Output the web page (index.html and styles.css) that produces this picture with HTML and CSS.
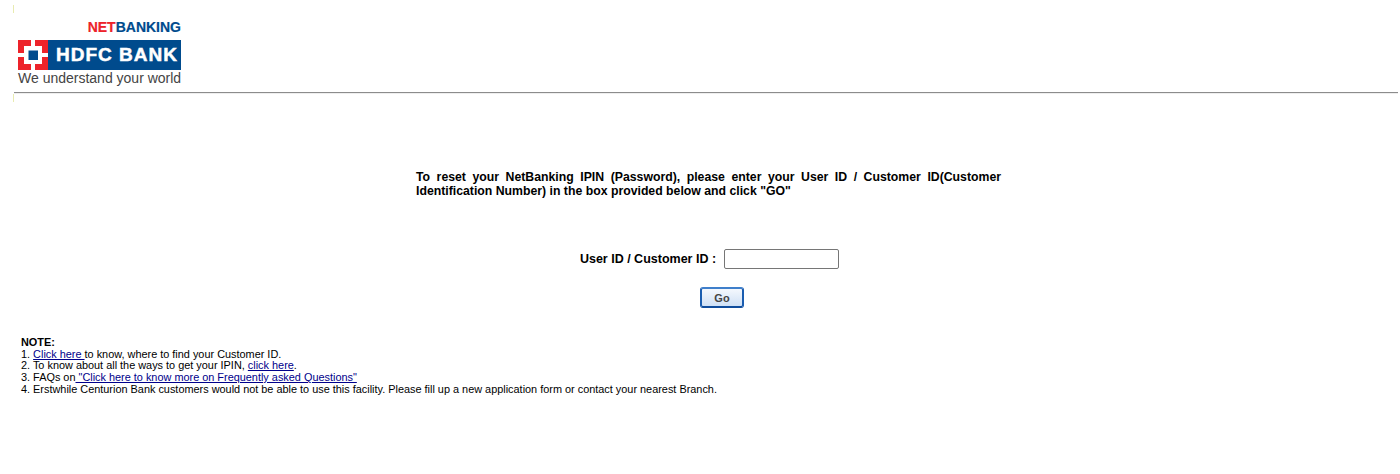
FILE: index.html
```html
<!DOCTYPE html>
<html lang="en">
<head>
  <meta charset="UTF-8" />
  <title>HDFC Bank NetBanking - Reset IPIN</title>
  <link rel="stylesheet" href="styles.css">
</head>
<body>

  <div class="header">
    <span class="tick"></span>
    <div class="logo">
      <div class="logo-net"><span class="net-red">NET</span>BANKING</div>
      <div class="logo-bar">
        <svg class="logo-mark" viewBox="0 0 30 30">
          <rect width="30" height="30" fill="#fff"/>
          <path fill="#ed232a" d="M0 0h13v6H6v7H0zM17 0h13v13h-6V6h-7zM24 17h6v13H17v-6h7zM0 17h6v7h7v6H0z"/>
          <rect x="10.5" y="10.5" width="9.5" height="9.5" fill="#004b8d"/>
        </svg>
        <div class="logo-name">HDFC BANK</div>
      </div>
      <div class="logo-tag">We understand your world</div>
    </div>
  </div>
  <div class="rule"></div>
  <span class="tick tick-low"></span>

  <p class="intro">To reset your NetBanking IPIN (Password), please enter your User ID / Customer ID(Customer Identification Number) in the box provided below and click "GO"</p>

  <form class="reset-form">
    <div class="field">
      <label for="userid">User ID / Customer ID :</label>
      <input id="userid" type="text" class="text-input">
    </div>
    <button type="button" class="btn-go">Go</button>
  </form>

  <div class="note">
    <b>NOTE:</b><br>
    1. <a href="#">Click here </a>to know, where to find your Customer ID.<br>
    2. To know about all the ways to get your IPIN, <a href="#">click here</a>.<br>
    3. FAQs on<a href="#"> "Click here to know more on Frequently asked Questions"</a><br>
    4. Erstwhile Centurion Bank customers would not be able to use this facility. Please fill up a new application form or contact your nearest Branch.
  </div>

</body>
</html>
```

FILE: styles.css
```css
body {
  margin: 0;
  background: #fff;
  color: #000;
  font-family: "Liberation Sans", Arial, sans-serif;
  height: 474px;
  overflow: hidden;
}

/* header + logo */
.header {
  display: flex;
  padding: 5px 0 0 13px;
  height: 87px;
  box-sizing: border-box;
}
.tick {
  display: block;
  width: 1px;
  height: 8px;
  background: #e8ebb0;
}
.tick-low {
  margin: 0 0 0 13px;
}
.logo {
  width: 163px;
  margin-left: 4px;
  padding-top: 14px;
}
.logo-net {
  text-align: right;
  font-size: 14px;
  line-height: 16px;
  font-weight: bold;
  color: #004b8d;
  white-space: nowrap;
  -webkit-text-stroke: 0.2px currentColor;
}
.net-red {
  color: #ed232a;
}
.logo-bar {
  display: flex;
  height: 30px;
  margin-top: 5px;
  background: #004b8d;
}
.logo-mark {
  width: 30px;
  height: 30px;
  flex: none;
}
.logo-name {
  flex: 1;
  padding-left: 8px;
  color: #fff;
  font-size: 19px;
  line-height: 30px;
  font-weight: bold;
  letter-spacing: 1px;
  white-space: nowrap;
  -webkit-text-stroke: 0.5px #fff;
}
.logo-tag {
  font-size: 14px;
  line-height: 16px;
  color: #444;
  white-space: nowrap;
}

.rule {
  height: 1px;
  margin: 5px 0 0 14px;
  width: 1384px;
  background: #8c8c8c;
  border-bottom: 1px solid #eee;
}

/* main copy */
.intro {
  width: 585px;
  margin: 68px 0 0 416px;
  font-size: 12.27px;
  line-height: 14px;
  font-weight: bold;
  text-align: justify;
}

.reset-form {
  display: flex;
  flex-direction: column;
  align-items: center;
  margin-top: 51px;
}
.field {
  display: flex;
  align-items: center;
  gap: 8px;
  margin-left: 19px;
}
.field label {
  font-size: 12.5px;
  font-weight: bold;
}
.text-input {
  width: 115px;
  height: 20px;
  box-sizing: border-box;
  padding: 0 3px;
  border: 1px solid #767676;
  border-radius: 2px;
  background: #fff;
}
.btn-go {
  width: 44px;
  height: 21px;
  margin: 18px 0 0 44px;
  padding: 0;
  border: 2px solid #1a5db0;
  border-top-color: #3f7fcb;
  border-bottom-color: #0f4c9c;
  border-radius: 3px;
  background: linear-gradient(#f4f8fd, #cfe0f5);
  color: #444;
  font-family: inherit;
  font-size: 11px;
  font-weight: bold;
}

/* footnotes */
.note {
  margin: 29px 0 0 21px;
  font-size: 10.9px;
  line-height: 11.7px;
}
.note a {
  color: #00008b;
}
```
